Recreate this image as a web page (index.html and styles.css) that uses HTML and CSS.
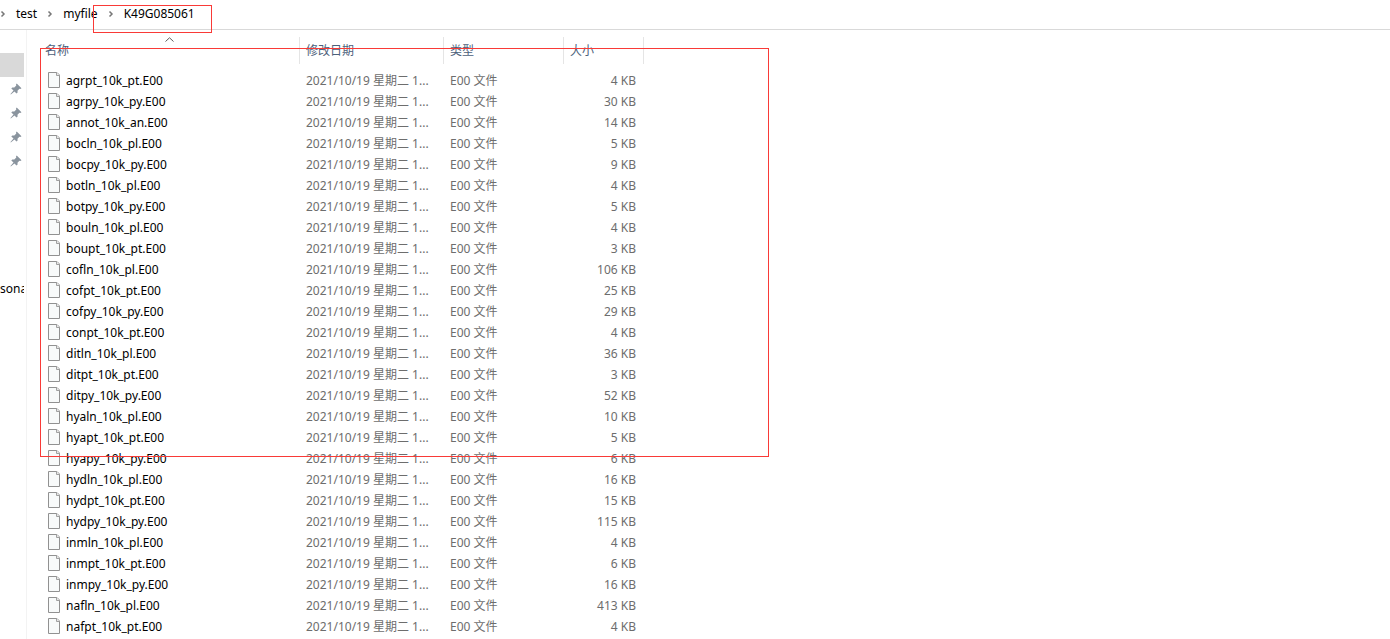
FILE: index.html
```html
<!DOCTYPE html>
<html lang="zh-CN">
<head>
<meta charset="utf-8">
<meta name="viewport" content="width=device-width, initial-scale=1">
<title>K49G085061</title>
<link rel="stylesheet" href="styles.css">
</head>
<body>
<svg class="symbols" aria-hidden="true">
  <symbol id="file" viewBox="0 0 12 16">
    <path d="M.5.5h8.500l2.500 2.500v12.500H.5z" fill="#f8fafa" stroke="#919191"/>
    <path d="M8.500.5v3h3" fill="#e8e8e8" stroke="#a0a0a0"/>
  </symbol>
  <symbol id="pin" viewBox="0 0 12 12">
    <path d="M6.700.5 11.500 5.200 10.300 6 9.400 5.800 7.500 7.700 7.600 9.600 6.600 10.500 4.400 8.400.8 11.400.5 11.100 3.500 7.500 1.300 5.500 2.300 4.500 4.300 4.400 6.300 2.500 6 1.500z" fill="#8a949e"/>
  </symbol>
  <symbol id="chevron" viewBox="0 0 6 8">
    <path d="M1.500 1.500 4 4 1.500 6.500" fill="none" stroke="#777" stroke-width="1.5"/>
  </symbol>
</svg>
<nav class="path" aria-label="路径">
  <svg class="sep"><use href="#chevron"/></svg>
  <a class="crumb" href="#test">test</a>
  <svg class="sep"><use href="#chevron"/></svg>
  <a class="crumb" href="#myfile">myfile</a>
  <svg class="sep"><use href="#chevron"/></svg>
  <a class="crumb" href="#k49">K49G085061</a>
</nav>
<div class="explorer">
  <aside class="sidebar">
    <div class="selected"></div>
    <div class="pinned"><svg class="pin"><use href="#pin"/></svg></div>
    <div class="pinned"><svg class="pin"><use href="#pin"/></svg></div>
    <div class="pinned"><svg class="pin"><use href="#pin"/></svg></div>
    <div class="pinned"><svg class="pin"><use href="#pin"/></svg></div>
    <div class="drive">sona</div>
  </aside>
  <main class="pane">
    <table class="files">
      <colgroup><col class="c-name"><col class="c-date"><col class="c-type"><col class="c-size"></colgroup>
      <thead>
        <tr><th>名称<svg class="sort" viewBox="0 0 9 5"><path d="M.5 4.5 4.5.8 8.5 4.5" fill="none" stroke="#5c5c5c"/></svg></th><th>修改日期</th><th>类型</th><th>大小</th></tr>
      </thead>
      <tbody>
        <tr><td><svg class="file"><use href="#file"/></svg>agrpt_10k_pt.E00</td><td>2021/10/19 星期二 1...</td><td>E00 文件</td><td>4 KB</td></tr>
        <tr><td><svg class="file"><use href="#file"/></svg>agrpy_10k_py.E00</td><td>2021/10/19 星期二 1...</td><td>E00 文件</td><td>30 KB</td></tr>
        <tr><td><svg class="file"><use href="#file"/></svg>annot_10k_an.E00</td><td>2021/10/19 星期二 1...</td><td>E00 文件</td><td>14 KB</td></tr>
        <tr><td><svg class="file"><use href="#file"/></svg>bocln_10k_pl.E00</td><td>2021/10/19 星期二 1...</td><td>E00 文件</td><td>5 KB</td></tr>
        <tr><td><svg class="file"><use href="#file"/></svg>bocpy_10k_py.E00</td><td>2021/10/19 星期二 1...</td><td>E00 文件</td><td>9 KB</td></tr>
        <tr><td><svg class="file"><use href="#file"/></svg>botln_10k_pl.E00</td><td>2021/10/19 星期二 1...</td><td>E00 文件</td><td>4 KB</td></tr>
        <tr><td><svg class="file"><use href="#file"/></svg>botpy_10k_py.E00</td><td>2021/10/19 星期二 1...</td><td>E00 文件</td><td>5 KB</td></tr>
        <tr><td><svg class="file"><use href="#file"/></svg>bouln_10k_pl.E00</td><td>2021/10/19 星期二 1...</td><td>E00 文件</td><td>4 KB</td></tr>
        <tr><td><svg class="file"><use href="#file"/></svg>boupt_10k_pt.E00</td><td>2021/10/19 星期二 1...</td><td>E00 文件</td><td>3 KB</td></tr>
        <tr><td><svg class="file"><use href="#file"/></svg>cofln_10k_pl.E00</td><td>2021/10/19 星期二 1...</td><td>E00 文件</td><td>106 KB</td></tr>
        <tr><td><svg class="file"><use href="#file"/></svg>cofpt_10k_pt.E00</td><td>2021/10/19 星期二 1...</td><td>E00 文件</td><td>25 KB</td></tr>
        <tr><td><svg class="file"><use href="#file"/></svg>cofpy_10k_py.E00</td><td>2021/10/19 星期二 1...</td><td>E00 文件</td><td>29 KB</td></tr>
        <tr><td><svg class="file"><use href="#file"/></svg>conpt_10k_pt.E00</td><td>2021/10/19 星期二 1...</td><td>E00 文件</td><td>4 KB</td></tr>
        <tr><td><svg class="file"><use href="#file"/></svg>ditln_10k_pl.E00</td><td>2021/10/19 星期二 1...</td><td>E00 文件</td><td>36 KB</td></tr>
        <tr><td><svg class="file"><use href="#file"/></svg>ditpt_10k_pt.E00</td><td>2021/10/19 星期二 1...</td><td>E00 文件</td><td>3 KB</td></tr>
        <tr><td><svg class="file"><use href="#file"/></svg>ditpy_10k_py.E00</td><td>2021/10/19 星期二 1...</td><td>E00 文件</td><td>52 KB</td></tr>
        <tr><td><svg class="file"><use href="#file"/></svg>hyaln_10k_pl.E00</td><td>2021/10/19 星期二 1...</td><td>E00 文件</td><td>10 KB</td></tr>
        <tr><td><svg class="file"><use href="#file"/></svg>hyapt_10k_pt.E00</td><td>2021/10/19 星期二 1...</td><td>E00 文件</td><td>5 KB</td></tr>
        <tr><td><svg class="file"><use href="#file"/></svg>hyapy_10k_py.E00</td><td>2021/10/19 星期二 1...</td><td>E00 文件</td><td>6 KB</td></tr>
        <tr><td><svg class="file"><use href="#file"/></svg>hydln_10k_pl.E00</td><td>2021/10/19 星期二 1...</td><td>E00 文件</td><td>16 KB</td></tr>
        <tr><td><svg class="file"><use href="#file"/></svg>hydpt_10k_pt.E00</td><td>2021/10/19 星期二 1...</td><td>E00 文件</td><td>15 KB</td></tr>
        <tr><td><svg class="file"><use href="#file"/></svg>hydpy_10k_py.E00</td><td>2021/10/19 星期二 1...</td><td>E00 文件</td><td>115 KB</td></tr>
        <tr><td><svg class="file"><use href="#file"/></svg>inmln_10k_pl.E00</td><td>2021/10/19 星期二 1...</td><td>E00 文件</td><td>4 KB</td></tr>
        <tr><td><svg class="file"><use href="#file"/></svg>inmpt_10k_pt.E00</td><td>2021/10/19 星期二 1...</td><td>E00 文件</td><td>6 KB</td></tr>
        <tr><td><svg class="file"><use href="#file"/></svg>inmpy_10k_py.E00</td><td>2021/10/19 星期二 1...</td><td>E00 文件</td><td>16 KB</td></tr>
        <tr><td><svg class="file"><use href="#file"/></svg>nafln_10k_pl.E00</td><td>2021/10/19 星期二 1...</td><td>E00 文件</td><td>413 KB</td></tr>
        <tr><td><svg class="file"><use href="#file"/></svg>nafpt_10k_pt.E00</td><td>2021/10/19 星期二 1...</td><td>E00 文件</td><td>4 KB</td></tr>
      </tbody>
    </table>
    <div class="mark mark-list"></div>
  </main>
</div>
<div class="mark mark-path"></div>
</body>
</html>
```
FILE: styles.css
```css
* { box-sizing: border-box; }
body {
  position: relative;
  margin: 0;
  background: #fff;
  color: #000;
  font: 12px/20px "Noto Sans", "Noto Sans CJK SC", sans-serif;
}
.symbols { position: absolute; width: 0; height: 0; }
.path {
  display: flex;
  align-items: center;
  gap: 10px;
  height: 30px;
  padding-bottom: 1px;
  border-bottom: 1px solid #d9d9d9;
}
.crumb { color: #000; text-decoration: none; }
.sep { width: 6px; height: 8px; flex: none; }
.explorer { display: flex; }
.sidebar {
  flex: none;
  width: 27px;
  padding: 23px 2px 0 0;
  border-right: 1px solid #f3f3f3;
}
.selected { height: 24px; background: #d9d9d9; }
.pinned {
  display: flex;
  align-items: center;
  justify-content: flex-end;
  height: 24px;
  padding-right: 2px;
}
.pin { width: 12px; height: 12px; }
.drive { overflow: hidden; margin-top: 106px; white-space: nowrap; }
.pane { position: relative; flex: 1; padding: 7px 0 2px 13px; }
.files { table-layout: fixed; width: 604px; border-collapse: separate; border-spacing: 0; }
.c-name { width: 260px; }
.c-date { width: 144px; }
.c-type { width: 120px; }
.c-size { width: 80px; }
.files th {
  position: relative;
  height: 27px;
  padding: 0 0 0 6px;
  border-right: 1px solid #e5e5e5;
  color: #4c607a;
  font-weight: 400;
  text-align: left;
}
.files th:first-child { padding-left: 5px; }
.files thead::after { content: ""; display: block; height: 6px; }
.sort { position: absolute; top: 0; left: 125px; width: 9px; height: 5px; }
.files td {
  height: 21px;
  padding: 0 0 0 6px;
  color: #6d6d6d;
  white-space: nowrap;
}
.files td:first-child { padding-left: 8px; color: #000; }
.files td:last-child { padding-right: 8px; text-align: right; }
.file { width: 12px; height: 16px; margin: 0 6px 2px 0; vertical-align: middle; }
.mark { position: absolute; border: 1px solid #f93a37; pointer-events: none; }
.mark-path { top: 5px; left: 93px; width: 119px; height: 28px; }
.mark-list { top: 18px; left: 13px; width: 729px; height: 409px; }
```
